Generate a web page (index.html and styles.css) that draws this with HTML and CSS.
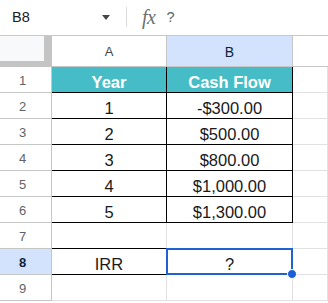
FILE: index.html
```html
<!DOCTYPE html>
<html>
<head>
<meta charset="utf-8">
<link rel="stylesheet" href="styles.css">
</head>
<body>
<div class="fbar">
  <div class="namebox"><span class="ref">B8</span><span class="caret"></span></div>
  <div class="sep"></div>
  <div class="fx">fx</div>
  <div class="ftext">?</div>
</div>
<div class="sheet">
  <div class="corner"></div>
  <div class="ch">A</div>
  <div class="ch ch-sel">B</div>
  <div class="ch ch-c"></div>

  <div class="rh">1</div>
  <div class="cell t th">Year</div>
  <div class="cell t th">Cash Flow</div>
  <div class="cell g"></div>

  <div class="rh">2</div>
  <div class="cell t">1</div>
  <div class="cell t">-$300.00</div>
  <div class="cell g"></div>

  <div class="rh">3</div>
  <div class="cell t">2</div>
  <div class="cell t">$500.00</div>
  <div class="cell g"></div>

  <div class="rh">4</div>
  <div class="cell t">3</div>
  <div class="cell t">$800.00</div>
  <div class="cell g"></div>

  <div class="rh">5</div>
  <div class="cell t">4</div>
  <div class="cell t">$1,000.00</div>
  <div class="cell g"></div>

  <div class="rh">6</div>
  <div class="cell t">5</div>
  <div class="cell t">$1,300.00</div>
  <div class="cell g"></div>

  <div class="rh">7</div>
  <div class="cell gb"></div>
  <div class="cell g"></div>
  <div class="cell g"></div>

  <div class="rh rh-sel">8</div>
  <div class="cell gb">IRR</div>
  <div class="cell g sel">?<span class="selbox"></span><span class="handle"></span></div>
  <div class="cell g"></div>

  <div class="rh">9</div>
  <div class="cell g"></div>
  <div class="cell g"></div>
  <div class="cell g"></div>
</div>
</body>
</html>
```
FILE: styles.css
```css
* { box-sizing: border-box; }
html, body {
  margin: 0;
  padding: 0;
  background: #ffffff;
  width: 328px;
  height: 303px;
  overflow: hidden;
  font-family: "Liberation Sans", Arial, sans-serif;
}
.fbar {
  height: 36px;
  border-bottom: 1px solid #c7c7c7;
  display: flex;
  align-items: center;
  padding-bottom: 1px;
}
.namebox {
  width: 112px;
  padding-left: 12px;
  padding-right: 2px;
  display: flex;
  align-items: center;
  justify-content: space-between;
}
.ref {
  font-size: 14.5px;
  color: #202124;
}
.caret {
  width: 0;
  height: 0;
  border-left: 4.5px solid transparent;
  border-right: 4.5px solid transparent;
  border-top: 5px solid #444746;
}
.sep {
  width: 1px;
  height: 20px;
  background: #dadce0;
  margin-left: 14px;
}
.fx {
  margin-left: 15px;
  font-family: "Liberation Serif", "Times New Roman", serif;
  font-style: italic;
  font-size: 20px;
  color: #6f6f6f;
  letter-spacing: -0.5px;
}
.ftext {
  margin-left: 11px;
  font-size: 14.5px;
  color: #5f6368;
}
.sheet {
  display: grid;
  grid-template-columns: 52px 115px 126px 1fr;
  grid-template-rows: 31px repeat(9, 26px);
}
.corner {
  background: #f8f9fa;
  border-right: 8px solid #c4c4c4;
  border-bottom: 6px solid #c4c4c4;
}
.ch {
  border-right: 1px solid #c4c7c5;
  border-bottom: 1px solid #c4c7c5;
  display: flex;
  align-items: center;
  justify-content: center;
  font-size: 13px;
  color: #444746;
  padding-top: 1px;
}
.ch-sel {
  background: #d3e3fd;
  color: #0b1f3f;
  font-size: 14px;
}
.ch-c { border-right: none; }
.rh {
  border-right: 1px solid #c4c7c5;
  border-bottom: 1px solid #c4c7c5;
  display: flex;
  align-items: center;
  justify-content: center;
  padding-right: 6px;
  font-size: 13px;
  color: #5f6368;
  padding-top: 1px;
}
.rh-sel {
  background: #d3e3fd;
  color: #0b1f3f;
  font-weight: bold;
}
.cell {
  display: flex;
  align-items: center;
  justify-content: center;
  font-size: 16.5px;
  color: #1a1a1a;
  padding-top: 5px;
}
.t {
  border-right: 1px solid #000000;
  border-bottom: 1px solid #000000;
}
.th {
  background: #46bdc6;
  color: #ffffff;
  font-weight: bold;
}
.g {
  border-right: 1px solid #e1e1e1;
  border-bottom: 1px solid #e1e1e1;
}
.gb {
  border-right: 1px solid #e1e1e1;
  border-bottom: 1px solid #000000;
}
.sel {
  position: relative;
}
.selbox {
  position: absolute;
  left: -1px;
  top: -1px;
  width: 127px;
  height: 27px;
  border: 2px solid #1f62d2;
}
.handle {
  position: absolute;
  left: 120px;
  top: 20px;
  width: 10px;
  height: 10px;
  border-radius: 50%;
  background: #1a5fd6;
  border: 1px solid #ffffff;
}
```
